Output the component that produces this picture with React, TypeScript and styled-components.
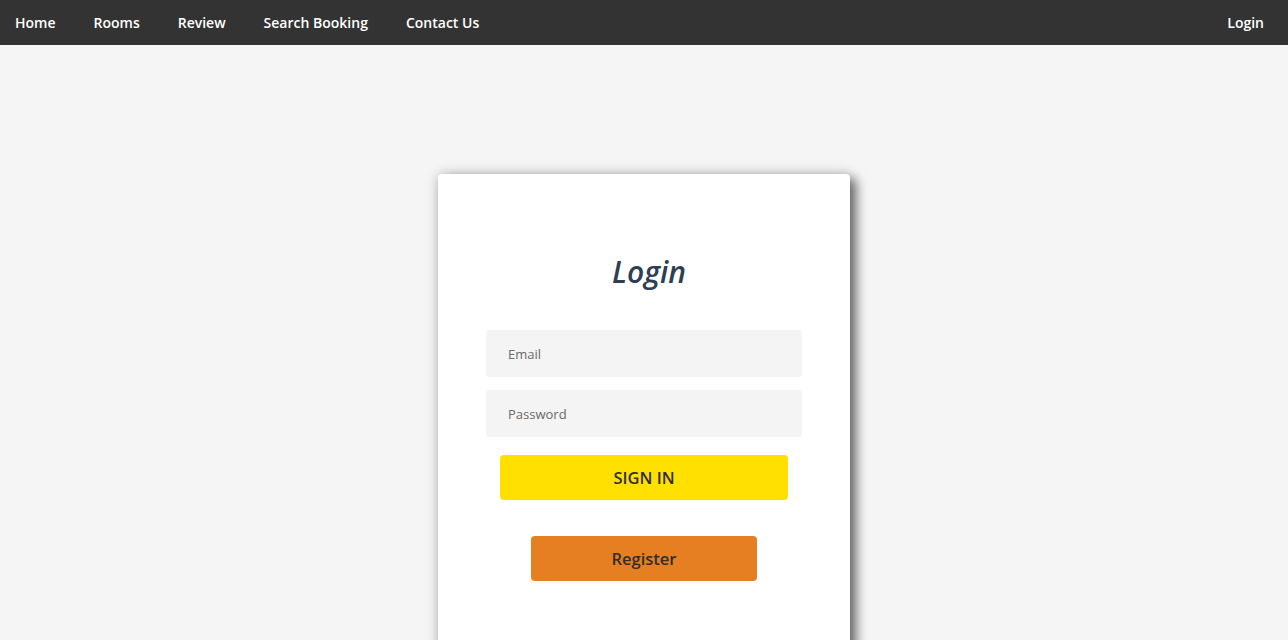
import React from 'react';
import styled, { createGlobalStyle } from 'styled-components';

const Global = createGlobalStyle`
    html, body {
        margin:0;
        padding:0;
        background:#f4f5f4;
        font-family:"Open Sans", "DejaVu Sans", sans-serif;
    }
    body {
        height:640px;
        overflow:hidden;
    }
`

const Bar = styled.nav`
    height:45px;
    background:#333333;
    display:flex;
    justify-content:space-between;
    align-items:center;
    padding:0 24px 0 15px;
`
const Links = styled.ul`
    display:flex;
    gap:38px;
    margin:0;
    padding:0;
    list-style:none;
`
const Link = styled.li`
    color:#ffffff;
    font-size:14px;
    font-weight:600;
    cursor:pointer;
`

const Main = styled.main`
    display:flex;
    justify-content:center;
    padding-top:129px;
`
const Card = styled.div`
    width:412px;
    height:490px;
    box-sizing:border-box;
    background:#ffffff;
    border-radius:4px;
    box-shadow:0 0 14px rgba(0,0,0,0.18), 6px 5px 12px rgba(0,0,0,0.55);
    padding:78px 48px 0;
    display:flex;
    flex-direction:column;
    align-items:center;
`
const Title = styled.h2`
    margin:0 0 38px;
    font-size:30px;
    font-style:italic;
    font-weight:600;
    color:#2e3f55;
    line-height:40px;
    padding-left:10px;
`
const Field = styled.input`
    width:100%;
    height:47px;
    box-sizing:border-box;
    border:none;
    border-radius:4px;
    background:#f4f4f4;
    padding:0 22px;
    font-family:inherit;
    font-size:13px;
    color:#333;
    margin-bottom:13px;
    outline:none;
    &::placeholder { color:#6a6a6a; }
`
const Button = styled.button<{ $bg: string; $w: number; $mt: number }>`
    width:${p => p.$w}px;
    height:45px;
    margin-top:${p => p.$mt}px;
    border:none;
    border-radius:4px;
    background:${p => p.$bg};
    color:#2f2f2f;
    font-family:inherit;
    font-size:16.5px;
    font-weight:600;
    cursor:pointer;
`

const App = () => {
    const nav = ['Home', 'Rooms', 'Review', 'Search Booking', 'Contact Us'];
    return (
        <>
            <Global />
            <Bar>
                <Links>
                    {nav.map(n => <Link key={n}>{n}</Link>)}
                </Links>
                <Links>
                    <Link>Login</Link>
                </Links>
            </Bar>
            <Main>
                <Card>
                    <Title>Login</Title>
                    <Field placeholder="Email" />
                    <Field type="password" placeholder="Password" />
                    <Button $bg="#ffe000" $w={288} $mt={5}>SIGN IN</Button>
                    <Button $bg="#e67e22" $w={226} $mt={36}>Register</Button>
                </Card>
            </Main>
        </>
    );
};

export default App;
